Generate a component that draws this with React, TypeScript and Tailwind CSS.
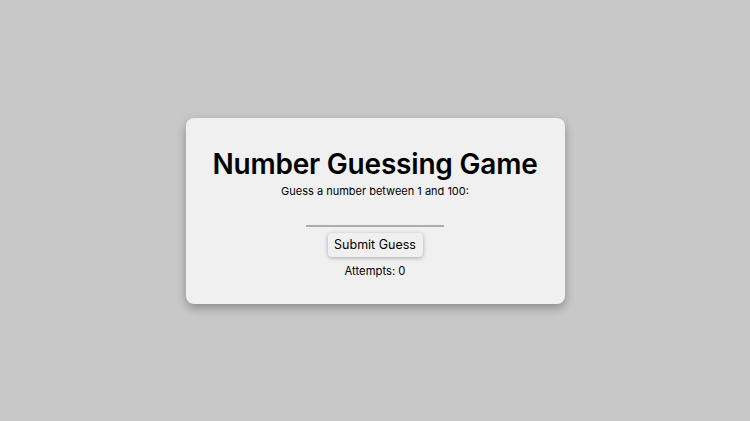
import React, { useState } from "react";

export default function App() {
  const [attempts] = useState(0);
  return (
    <div className="min-h-screen w-full bg-[#c8c8c8] flex items-center justify-center" style={{ minHeight: 421 }}>
      <div className="w-[379px] h-[186px] bg-[#f0f0f0] rounded-lg shadow-[0_4px_10px_rgba(0,0,0,0.3)] flex flex-col items-center font-['Inter',sans-serif] text-black">
        <h1 className="mt-[29px] text-[28px] leading-[34px] font-semibold tracking-[-0.2px]">Number Guessing Game</h1>
        <p className="mt-[3px] text-[11px] leading-[14px]">Guess a number between 1 and 100:</p>
        <input className="mt-[9px] w-[138px] h-[20px] bg-transparent border-0 border-b-2 border-[#acacac] outline-none text-center text-[13px]" />
        <button className="mt-[6px] h-[24px] w-[95px] rounded-[4px] bg-[#f0f0f0] shadow-[0_1px_4px_rgba(0,0,0,0.3)] text-[12.5px] leading-[24px]">Submit Guess</button>
        <p className="mt-[7px] text-[11.25px] leading-[14px]">Attempts: {attempts}</p>
      </div>
    </div>
  );
}
